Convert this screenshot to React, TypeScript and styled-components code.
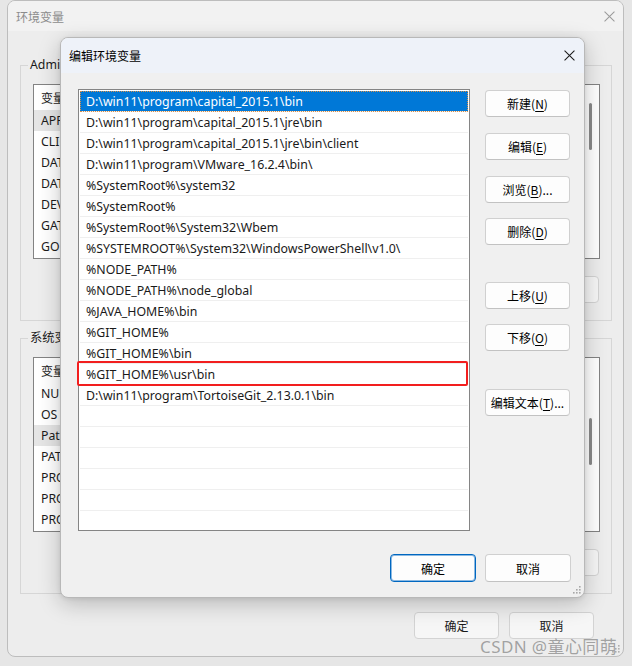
import React from "react";
import styled, { createGlobalStyle } from "styled-components";

const GlobalStyle = createGlobalStyle`
  html, body { margin: 0; padding: 0; }
  body {
    background: #e6e6e6;
    font-family: "Noto Sans", "Noto Sans CJK SC", sans-serif;
    font-size: 12px;
    color: #1a1a1a;
  }
  * { box-sizing: border-box; }
`;

const Screen = styled.div`
  position: relative;
  width: 632px;
  height: 666px;
  overflow: hidden;
  background: #e6e6e6;
`;

/* ---------- background window ---------- */
const BgWindow = styled.div`
  margin-left: 7px;
  width: 617px;
  height: 657px;
  border: 1px solid #bdbdbd;
  border-radius: 8px;
  background: #ededed;
  display: flex;
  flex-direction: column;
  overflow: hidden;
  position: relative;
`;

const BgTitleBar = styled.div`
  height: 30px;
  flex: none;
  display: flex;
  align-items: center;
  justify-content: space-between;
  padding: 0 8px 0 8px;
  background: #f2f2f2;
  color: #8c8c8c;
  font-family: "Noto Sans CJK SC", sans-serif;
  font-size: 12px;
`;

const BgBody = styled.div`
  padding: 0 11px 0 12px;
  display: flex;
  flex-direction: column;
`;

const Group = styled.div<{ $mt: number }>`
  position: relative;
  margin-top: ${(p) => p.$mt}px;
  border: 1px solid #d6d6d6;
  padding: 18px 11px 17px 12px;
  display: flex;
  flex-direction: column;
  gap: 17px;
`;

const Legend = styled.span`
  position: absolute;
  top: -10px;
  left: 7px;
  padding: 0 2px;
  background: #ededed;
  color: #1a1a1a;
  font-family: "Noto Sans", "Noto Sans CJK SC", sans-serif;
  font-size: 12.3px;
  line-height: 18px;
`;

const BgList = styled.div`
  height: 175px;
  border: 1px solid #838383;
  background: #ffffff;
  display: flex;
`;

const BgListMain = styled.div`
  flex: 1;
  display: flex;
  flex-direction: column;
`;

const BgHeader = styled.div`
  height: 25px;
  display: flex;
  align-items: center;
  padding-left: 7px;
  font-family: "Noto Sans CJK SC", sans-serif;
  color: #1a1a1a;
`;

const BgRow = styled.div<{ $hl?: boolean }>`
  height: 21px;
  display: flex;
  align-items: center;
  padding-left: 7px;
  background: ${(p) => (p.$hl ? "#e5e5e5" : "transparent")};
  color: #1c1c1c;
  font-size: 12.3px;
`;

const ScrollTrack = styled.div`
  width: 17px;
  flex: none;
  padding-left: 7px;
`;

const Thumb = styled.div<{ $top: number }>`
  margin-top: ${(p) => p.$top}px;
  width: 3px;
  height: 47px;
  border-radius: 2px;
  background: #8a8a8a;
`;

const ButtonRow = styled.div<{ $pr?: number }>`
  display: flex;
  justify-content: flex-end;
  gap: 9px;
  padding-right: ${(p) => p.$pr ?? 0}px;
`;

const BgButton = styled.div`
  width: 85px;
  height: 27px;
  border: 1px solid #d3d3d3;
  border-radius: 4px;
  background: #f6f6f6;
  display: flex;
  align-items: center;
  justify-content: center;
  font-family: "Noto Sans CJK SC", sans-serif;
  color: #1a1a1a;
`;

const BgFooter = styled.div`
  margin-top: 18px;
  display: flex;
  justify-content: flex-end;
  gap: 10px;
  padding-right: 18px;
`;

/* ---------- dialog ---------- */
const Dialog = styled.div`
  position: absolute;
  left: 60px;
  top: 37px;
  width: 525px;
  height: 561px;
  border: 1px solid #b8b8b8;
  border-radius: 8px;
  background: #f0f0f0;
  box-shadow: 0 6px 22px rgba(0, 0, 0, 0.22), 0 1px 4px rgba(0, 0, 0, 0.08);
  display: flex;
  flex-direction: column;
  overflow: hidden;
`;

const DialogTitleBar = styled.div`
  height: 35px;
  flex: none;
  display: flex;
  align-items: center;
  justify-content: space-between;
  padding: 0 9px 0 8px;
  background: #eef2f9;
  font-family: "Noto Sans CJK SC", sans-serif;
  font-size: 12px;
  color: #000;
`;

const DialogBody = styled.div`
  display: flex;
  gap: 15px;
  padding: 16px 14px 0 17px;
`;

const PathList = styled.div`
  width: 392px;
  height: 442px;
  border: 1px solid #858585;
  background: #ffffff;
  padding: 1px;
  display: flex;
  flex-direction: column;
`;

const PathRow = styled.div<{ $selected?: boolean; $marked?: boolean }>`
  position: relative;
  flex: none;
  height: 21px;
  display: flex;
  align-items: center;
  padding-left: 6px;
  border-bottom: 1px solid #efefef;
  background-clip: padding-box;
  background: ${(p) => (p.$selected ? "#0078d7" : "transparent")};
  color: ${(p) => (p.$selected ? "#ffffff" : "#1a1a1a")};
  outline: ${(p) => (p.$selected ? "1px dotted #d9904a" : "none")};
  outline-offset: -1px;
  font-family: "Noto Sans", "Noto Sans CJK SC", sans-serif;
  font-size: 12.35px;
  white-space: nowrap;

  &::after {
    content: "";
    display: ${(p) => (p.$marked ? "block" : "none")};
    position: absolute;
    left: -3px;
    right: 0;
    top: -3px;
    bottom: -2px;
    border: 2px solid #f21e1e;
    border-radius: 2px;
  }
`;

const Filler = styled.div`
  flex: 1;
  min-height: 0;
  background: repeating-linear-gradient(
    to bottom,
    transparent 0px,
    transparent 20px,
    #efefef 20px,
    #efefef 21px
  );
`;

const SideColumn = styled.div`
  width: 85px;
  display: flex;
  flex-direction: column;
`;

const Button = styled.div<{ $mt?: number; $primary?: boolean; $w?: number }>`
  margin-top: ${(p) => p.$mt ?? 0}px;
  width: ${(p) => p.$w ?? 85}px;
  height: ${(p) => (p.$primary !== undefined ? 28 : 27)}px;
  border: 1px solid ${(p) => (p.$primary ? "#0067c0" : "#d0d0d0")};
  border-bottom-color: ${(p) => (p.$primary ? "#0067c0" : "#c2c2c2")};
  box-shadow: ${(p) => (p.$primary ? "inset 0 0 0 1px rgba(0,103,192,0.45)" : "none")};
  border-radius: 4px;
  background: #fdfdfd;
  display: flex;
  align-items: center;
  justify-content: center;
  font-family: "Noto Sans CJK SC", sans-serif;
  font-size: 12px;
  color: #000;
  white-space: nowrap;
  u { text-underline-offset: 2px; }
`;

const DialogFooter = styled.div`
  margin-top: 23px;
  display: flex;
  justify-content: flex-end;
  gap: 9px;
  padding-right: 13px;
`;

const GripBox = styled.div<{ $r: number; $b: number }>`
  position: absolute;
  right: ${(p) => p.$r}px;
  bottom: ${(p) => p.$b}px;
  display: flex;
`;

const Watermark = styled.div`
  position: absolute;
  left: 480px;
  top: 636px;
  font-family: "Noto Sans", "Noto Sans CJK SC", sans-serif;
  font-size: 17px;
  line-height: 22px;
  color: rgba(105, 105, 105, 0.58);
  white-space: nowrap;
  letter-spacing: 0.4px;
`;

const XIcon = ({ size, color }: { size: number; color: string }) => (
  <svg width={size} height={size} viewBox="0 0 10 10">
    <path d="M0.5 0.5L9.5 9.5M9.5 0.5L0.5 9.5" stroke={color} strokeWidth={0.95} fill="none" />
  </svg>
);

const Grip = ({ color }: { color: string }) => (
  <svg width="8" height="8" viewBox="0 0 8 8" fill={color}>
    <rect x="6" y="0" width="1.6" height="1.6" />
    <rect x="3" y="3" width="1.6" height="1.6" />
    <rect x="6" y="3" width="1.6" height="1.6" />
    <rect x="0" y="6" width="1.6" height="1.6" />
    <rect x="3" y="6" width="1.6" height="1.6" />
    <rect x="6" y="6" width="1.6" height="1.6" />
  </svg>
);

const userVars = [
  "APPCODE_VM_OPTIONS",
  "CLION_VM_OPTIONS",
  "DATAGRIP_VM_OPTIONS",
  "DATASPELL_VM_OPTIONS",
  "DEVECOSTUDIO_VM_OPTIONS",
  "GATEWAY_VM_OPTIONS",
  "GOLAND_VM_OPTIONS",
];

const sysVars = [
  "NUMBER_OF_PROCESSORS",
  "OS",
  "Path",
  "PATHEXT",
  "PROCESSOR_ARCHITECTURE",
  "PROCESSOR_IDENTIFIER",
  "PROCESSOR_LEVEL",
];

const paths = [
  "D:\\win11\\program\\capital_2015.1\\bin",
  "D:\\win11\\program\\capital_2015.1\\jre\\bin",
  "D:\\win11\\program\\capital_2015.1\\jre\\bin\\client",
  "D:\\win11\\program\\VMware_16.2.4\\bin\\",
  "%SystemRoot%\\system32",
  "%SystemRoot%",
  "%SystemRoot%\\System32\\Wbem",
  "%SYSTEMROOT%\\System32\\WindowsPowerShell\\v1.0\\",
  "%NODE_PATH%",
  "%NODE_PATH%\\node_global",
  "%JAVA_HOME%\\bin",
  "%GIT_HOME%",
  "%GIT_HOME%\\bin",
  "%GIT_HOME%\\usr\\bin",
  "D:\\win11\\program\\TortoiseGit_2.13.0.1\\bin",
];

const sideButtons: { label: string; key: string; tail?: string; mt: number }[] = [
  { label: "新建", key: "N", mt: 1 },
  { label: "编辑", key: "E", mt: 16 },
  { label: "浏览", key: "B", tail: "...", mt: 16 },
  { label: "删除", key: "D", mt: 15 },
  { label: "上移", key: "U", mt: 37 },
  { label: "下移", key: "O", mt: 15 },
  { label: "编辑文本", key: "T", tail: "...", mt: 38 },
];

const VarGroup = ({
  title,
  rows,
  hl,
  thumb,
  mt,
}: {
  title: string;
  rows: string[];
  hl: number;
  thumb: number;
  mt: number;
}) => (
  <Group $mt={mt}>
    <Legend>{title}</Legend>
    <BgList>
      <BgListMain>
        <BgHeader>变量</BgHeader>
        {rows.map((r, i) => (
          <BgRow key={r} $hl={i === hl}>
            {r}
          </BgRow>
        ))}
      </BgListMain>
      <ScrollTrack>
        <Thumb $top={thumb} />
      </ScrollTrack>
    </BgList>
    <ButtonRow $pr={1}>
      <BgButton>新建(N)...</BgButton>
      <BgButton>编辑(E)...</BgButton>
      <BgButton>删除(D)</BgButton>
    </ButtonRow>
  </Group>
);

export default function App() {
  return (
    <>
      <GlobalStyle />
      <Screen>
        <BgWindow>
          <BgTitleBar>
            <span>环境变量</span>
            <XIcon size={11} color="#9a9a9a" />
          </BgTitleBar>
          <BgBody>
            <VarGroup title="Administrator 的用户变量(U)" rows={userVars} hl={0} thumb={18} mt={34} />
            <VarGroup title="系统变量(S)" rows={sysVars} hl={2} thumb={60} mt={17} />
            <BgFooter>
              <BgButton>确定</BgButton>
              <BgButton>取消</BgButton>
            </BgFooter>
          </BgBody>
          <GripBox $r={3} $b={3}>
            <Grip color="#b0b0b0" />
          </GripBox>
        </BgWindow>

        <Dialog>
          <DialogTitleBar>
            <span>编辑环境变量</span>
            <XIcon size={11} color="#1a1a1a" />
          </DialogTitleBar>
          <DialogBody>
            <PathList>
              {paths.map((p, i) => (
                <PathRow key={p} $selected={i === 0} $marked={i === 13}>
                  {p}
                </PathRow>
              ))}
              <Filler />
            </PathList>
            <SideColumn>
              {sideButtons.map((b) => (
                <Button key={b.key} $mt={b.mt}>
                  {b.label}(<u>{b.key}</u>){b.tail ?? ""}
                </Button>
              ))}
            </SideColumn>
          </DialogBody>
          <DialogFooter>
            <Button $primary={true} $w={86}>
              确定
            </Button>
            <Button $primary={false} $w={86}>
              取消
            </Button>
          </DialogFooter>
          <GripBox $r={3} $b={3}>
            <Grip color="#a8a8a8" />
          </GripBox>
        </Dialog>

        <Watermark>CSDN @童心同萌</Watermark>
      </Screen>
    </>
  );
}
